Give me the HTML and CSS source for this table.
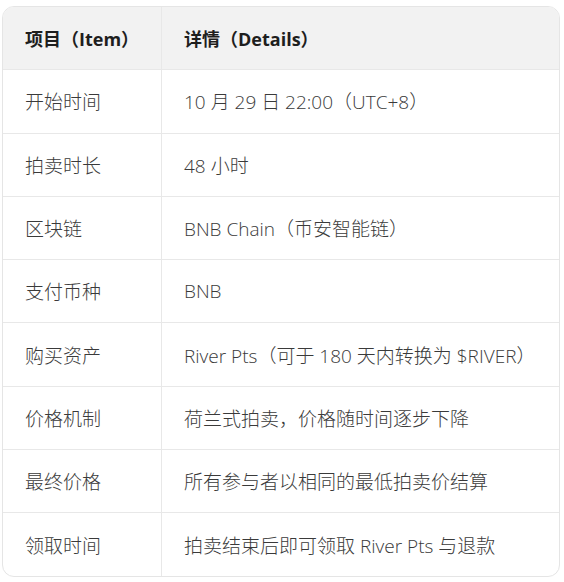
FILE: index.html
```html
<!DOCTYPE html>
<html lang="zh">
<head>
<meta charset="utf-8">
<link rel="stylesheet" href="styles.css">
</head>
<body>
<div class="wrap">
  <div class="table">
    <div class="row head"><div class="c1">项目（Item）</div><div class="c2">详情（Details）</div></div>
    <div class="row"><div class="c1">开始时间</div><div class="c2">10 月 29 日 22:00（UTC+8）</div></div>
    <div class="row"><div class="c1">拍卖时长</div><div class="c2">48 小时</div></div>
    <div class="row"><div class="c1">区块链</div><div class="c2">BNB Chain（币安智能链）</div></div>
    <div class="row"><div class="c1">支付币种</div><div class="c2">BNB</div></div>
    <div class="row"><div class="c1">购买资产</div><div class="c2">River Pts（可于 180 天内转换为 $RIVER）</div></div>
    <div class="row"><div class="c1">价格机制</div><div class="c2">荷兰式拍卖，价格随时间逐步下降</div></div>
    <div class="row"><div class="c1">最终价格</div><div class="c2">所有参与者以相同的最低拍卖价结算</div></div>
    <div class="row"><div class="c1">领取时间</div><div class="c2">拍卖结束后即可领取 River Pts 与退款</div></div>
  </div>
</div>
</body>
</html>
```
FILE: styles.css
```css
html, body { margin: 0; padding: 0; background: #fff; }
body {
  font-family: "Open Sans", "Noto Sans CJK SC", sans-serif;
  font-size: 19px;
  font-weight: 300;
  color: #3a3a3a;
}
.wrap { padding: 6px 4px 0 2px; }
.table {
  border: 1px solid #e5e5e5;
  border-radius: 12px;
  overflow: hidden;
}
.row {
  display: grid;
  grid-template-columns: 159px 1fr;
  height: 62.3px;
  border-bottom: 1px solid #e8e8e8;
}
.row:last-child { border-bottom: none; }
.row > div {
  display: flex;
  align-items: center;
  padding-left: 22px;
  white-space: nowrap;
}
.c1 { border-right: 1px solid #e8e8e8; }
.head { background: #f2f2f2; color: #1e1e1e; font-weight: 700; font-size: 18px; }
```
